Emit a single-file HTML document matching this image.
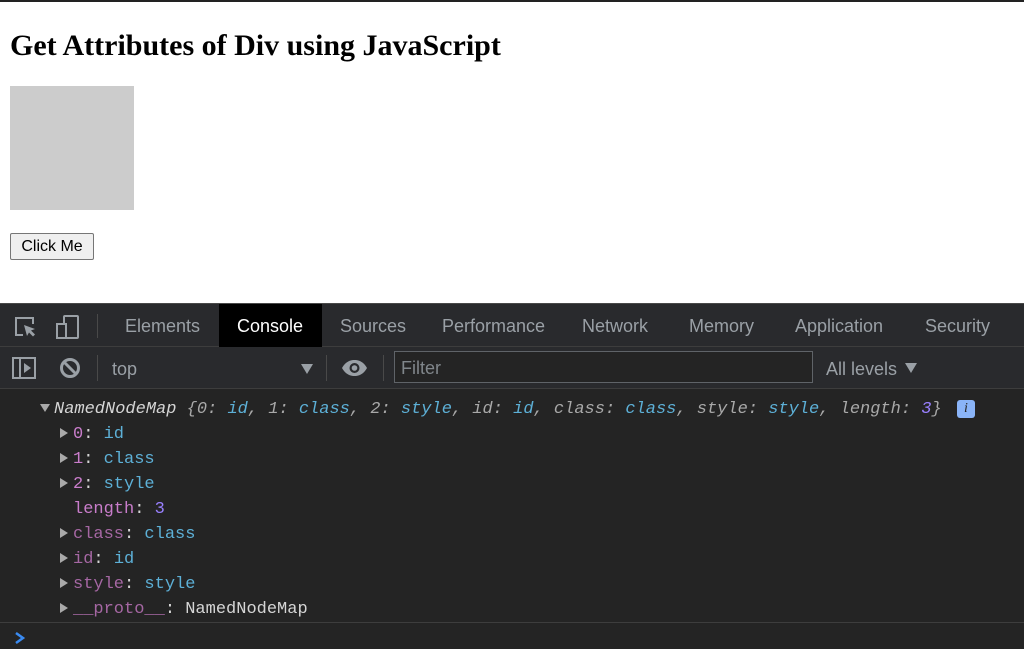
<!DOCTYPE html>
<html><head><meta charset="utf-8"><style>
*{margin:0;padding:0;box-sizing:border-box}
body{width:1024px;height:649px;overflow:hidden;background:#fff;position:relative;font-family:"Liberation Sans",sans-serif}
.topbar{position:absolute;left:0;top:0;width:1024px;height:2px;background:#222}
h1{position:absolute;left:10px;top:29px;font:bold 30px "Liberation Serif",serif;color:#000;white-space:nowrap}
.box{position:absolute;left:10px;top:86px;width:124px;height:124px;background:#ccc}
.btn{position:absolute;left:10px;top:233px;width:84px;height:27px;border:1px solid #767676;border-radius:2px;background:#efefef;font-size:16px;color:#000;text-align:center;line-height:25px}
.dt{position:absolute;left:0;top:303px;width:1024px;height:346px;background:#242424}
.tabs{position:absolute;left:0;top:0;width:1024px;height:44px;background:#292a2d;border-top:1px solid #494949;border-bottom:1px solid #3d3d3d}
.tab{position:absolute;top:1px;height:42px;line-height:42px;color:#9aa0a6;font-size:18px;white-space:nowrap}
.tb{position:absolute;left:0;top:44px;width:1024px;height:42px;background:#292a2d;border-bottom:1px solid #3d3d3d}
.sep{position:absolute;width:1px;background:#494949}
.mono{font-family:"Liberation Mono",monospace;font-size:17px;white-space:nowrap;position:absolute;color:#d5d5d5;margin-top:3px}
.i{font-style:italic}
.v{color:#5db0d7}.k{color:#c97dcb}.kk{color:#a567a3}.n{color:#9980ff}.g{color:#a9a9a9}
.tri{position:absolute;width:0;height:0}
</style></head><body>
<div class="topbar"></div>
<h1>Get Attributes of Div using JavaScript</h1>
<div class="box"></div>
<div class="btn">Click Me</div>
<div class="dt">
 <div class="tabs">
  <svg style="position:absolute;left:14px;top:11px" width="24" height="24" viewBox="0 0 24 24" fill="none" stroke="#9aa0a6" stroke-width="2"><path d="M9 20H2V3h17v6"/><path d="M10 10l11 4-4 1.5 4 4-2 2-4-4L13 21z" fill="#9aa0a6" stroke="none"/></svg>
  <svg style="position:absolute;left:55px;top:10px" width="26" height="26" viewBox="0 0 26 26" fill="none" stroke="#9aa0a6" stroke-width="2"><rect x="9" y="2" width="14" height="22" rx="1"/><rect x="2" y="10" width="9" height="14" fill="#292a2d"/></svg>
  <div class="sep" style="left:97px;top:10px;height:24px"></div>
  <div class="tab" style="left:125px">Elements</div>
  <div class="tab" style="left:219px;top:0;height:43px;line-height:44px;width:103px;background:#000;color:#fff;padding-left:18px">Console</div>
  <div class="tab" style="left:340px">Sources</div>
  <div class="tab" style="left:442px">Performance</div>
  <div class="tab" style="left:582px">Network</div>
  <div class="tab" style="left:689px">Memory</div>
  <div class="tab" style="left:795px">Application</div>
  <div class="tab" style="left:925px">Security</div>
 </div>
 <div class="tb">
  <svg style="position:absolute;left:12px;top:10px" width="24" height="22" viewBox="0 0 24 22" fill="none" stroke="#9aa0a6" stroke-width="2"><rect x="1" y="1" width="22" height="20"/><line x1="8" y1="1" x2="8" y2="21"/><path d="M12 6l7 5-7 5z" fill="#9aa0a6" stroke="none"/></svg>
  <svg style="position:absolute;left:59px;top:10px" width="22" height="22" viewBox="0 0 22 22" fill="none" stroke="#9aa0a6" stroke-width="3"><circle cx="11" cy="11" r="8.5"/><line x1="5" y1="5" x2="17" y2="17"/></svg>
  <div class="sep" style="left:97px;top:8px;height:26px"></div>
  <div class="tab" style="left:112px;top:1px">top</div>
  <div style="position:absolute;left:301px;top:17px;border-left:6px solid transparent;border-right:6px solid transparent;border-top:10px solid #9aa0a6"></div>
  <div class="sep" style="left:326px;top:8px;height:26px"></div>
  <svg style="position:absolute;left:341px;top:12px" width="27" height="18" viewBox="0 0 27 18"><path d="M1 9C5 2 10 1 13.5 1S22 2 26 9C22 16 17 17 13.5 17S5 16 1 9z" fill="#9aa0a6"/><circle cx="13.5" cy="9" r="5" fill="#292a2d"/><circle cx="13.5" cy="9" r="2.8" fill="#9aa0a6"/></svg>
  <div class="sep" style="left:383px;top:8px;height:26px"></div>
  <div style="position:absolute;left:394px;top:4px;width:419px;height:32px;border:1px solid #5f6368;background:#242424;color:#80868b;font-size:18px;line-height:32px;padding-left:6px">Filter</div>
  <div class="tab" style="left:826px;top:1px">All levels</div>
  <div style="position:absolute;left:905px;top:16px;border-left:6px solid transparent;border-right:6px solid transparent;border-top:10px solid #9aa0a6"></div>
 </div>
 <div class="tri" style="left:40px;top:101px;border-left:5px solid transparent;border-right:5px solid transparent;border-top:8px solid #a9a9a9"></div>
 <div class="mono i" style="left:54px;top:94px"><span>NamedNodeMap</span> <span class="g">{0: </span><span class="v">id</span><span class="g">, 1: </span><span class="v">class</span><span class="g">, 2: </span><span class="v">style</span><span class="g">, id: </span><span class="v">id</span><span class="g">, class: </span><span class="v">class</span><span class="g">, style: </span><span class="v">style</span><span class="g">, length: </span><span class="n">3</span><span class="g">}</span></div>
 <div style="position:absolute;left:957px;top:97px;width:18px;height:18px;border-radius:3px;background:#8ab4f8;color:#242424;font:italic 14px 'Liberation Serif',serif;text-align:center;line-height:18px">i</div>
 <div class="tri" style="left:60px;top:125px;border-top:5px solid transparent;border-bottom:5px solid transparent;border-left:8px solid #a9a9a9"></div>
 <div class="mono" style="left:73px;top:119px"><span class="k">0</span>: <span class="v">id</span></div>
 <div class="tri" style="left:60px;top:150px;border-top:5px solid transparent;border-bottom:5px solid transparent;border-left:8px solid #a9a9a9"></div>
 <div class="mono" style="left:73px;top:144px"><span class="k">1</span>: <span class="v">class</span></div>
 <div class="tri" style="left:60px;top:175px;border-top:5px solid transparent;border-bottom:5px solid transparent;border-left:8px solid #a9a9a9"></div>
 <div class="mono" style="left:73px;top:169px"><span class="k">2</span>: <span class="v">style</span></div>
 <div class="mono" style="left:73px;top:194px"><span class="k">length</span>: <span class="n">3</span></div>
 <div class="tri" style="left:60px;top:225px;border-top:5px solid transparent;border-bottom:5px solid transparent;border-left:8px solid #a9a9a9"></div>
 <div class="mono" style="left:73px;top:219px"><span class="kk">class</span>: <span class="v">class</span></div>
 <div class="tri" style="left:60px;top:250px;border-top:5px solid transparent;border-bottom:5px solid transparent;border-left:8px solid #a9a9a9"></div>
 <div class="mono" style="left:73px;top:244px"><span class="kk">id</span>: <span class="v">id</span></div>
 <div class="tri" style="left:60px;top:275px;border-top:5px solid transparent;border-bottom:5px solid transparent;border-left:8px solid #a9a9a9"></div>
 <div class="mono" style="left:73px;top:269px"><span class="kk">style</span>: <span class="v">style</span></div>
 <div class="tri" style="left:60px;top:300px;border-top:5px solid transparent;border-bottom:5px solid transparent;border-left:8px solid #a9a9a9"></div>
 <div class="mono" style="left:73px;top:294px"><span class="kk">__proto__</span>: NamedNodeMap</div>
 <div style="position:absolute;left:0;top:319px;width:1024px;height:1px;background:#3d3d3d"></div>
 <svg style="position:absolute;left:14px;top:328px" width="12" height="14" viewBox="0 0 12 14" fill="none" stroke="#3a8bf2" stroke-width="2.5"><path d="M2 2l7 5-7 5"/></svg>
</div>
</body></html>
